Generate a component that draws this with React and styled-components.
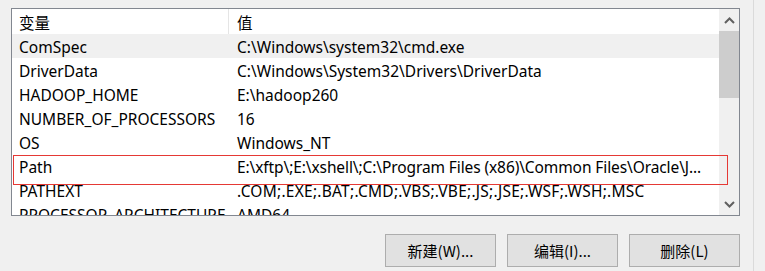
import React from "react";
import styled, { createGlobalStyle } from "styled-components";

const rows = [
  ["ComSpec", "C:\\Windows\\system32\\cmd.exe", 0],
  ["DriverData", "C:\\Windows\\System32\\Drivers\\DriverData", 0],
  ["HADOOP_HOME", "E:\\hadoop260", 0],
  ["NUMBER_OF_PROCESSORS", "16", 0],
  ["OS", "Windows_NT", 0],
  ["Path", "E:\\xftp\\;E:\\xshell\\;C:\\Program Files (x86)\\Common Files\\Oracle\\J...", -0.1],
  ["PATHEXT", ".COM;.EXE;.BAT;.CMD;.VBS;.VBE;.JS;.JSE;.WSF;.WSH;.MSC", 0.25],
  ["PROCESSOR_ARCHITECTURE", "AMD64", 0],
];

const Global = createGlobalStyle`
  html, body {
    margin: 0;
    background: #f0f0f0;
  }
  body {
    font-family: "Noto Sans", "Noto Sans CJK SC", sans-serif;
    font-size: 15.5px;
    color: #000;
  }
`;

const Window = styled.div`
  width: 754px;
  height: 271px;
  border-right: 1px solid #dadada;
  padding: 8px 0 0 11px;
  box-sizing: border-box;
`;

const ListBox = styled.div`
  position: relative;
  width: 729px;
  height: 208px;
  border: 1px solid #828790;
  box-sizing: border-box;
  background: #fff;
  display: flex;
`;

const Table = styled.div`
  flex: 1;
  overflow: hidden;
`;

const Row = styled.div`
  display: grid;
  grid-template-columns: 217px 1fr;
  height: ${(p) => (p.$header ? 25 : 24)}px;
  align-items: center;
  background: ${(p) => (p.$selected ? "#f0f0f0" : "#fff")};
  white-space: nowrap;
`;

const Cell = styled.div`
  box-sizing: border-box;
  padding: 2px 0 0 ${(p) => (p.$first ? 7 : 8)}px;
  height: 100%;
  display: flex;
  align-items: center;
  letter-spacing: ${(p) => p.$tracking || 0}px;
  border-right: ${(p) => (p.$divider ? "1px solid #e5e5e5" : "none")};
  overflow: hidden;
`;

const Highlight = styled.div`
  position: absolute;
  left: 1px;
  top: 146px;
  width: 715px;
  height: 30px;
  border: 1px solid #e53935;
  box-sizing: border-box;
  pointer-events: none;
`;

const ScrollBar = styled.div`
  width: 20px;
  background: #f0f0f0;
  display: flex;
  flex-direction: column;
`;

const Arrow = styled.div`
  height: 22px;
  display: flex;
  align-items: center;
  justify-content: center;
`;

const Thumb = styled.div`
  height: 67px;
  background: #cdcdcd;
`;

const Track = styled.div`
  flex: 1;
`;

const Buttons = styled.div`
  display: flex;
  justify-content: flex-end;
  gap: 11px;
  width: 729px;
  margin-top: 18px;
`;

const Button = styled.button`
  width: 111px;
  height: 33px;
  background: #e1e1e1;
  border: 1px solid #adadad;
  font-family: "Noto Sans CJK SC", sans-serif;
  font-size: 15px;
  color: #000;
  padding: 0;
`;

const Chevron = ({ up }) => (
  <svg width="11" height="7" viewBox="0 0 11 7">
    <path
      d={up ? "M1 6 L5.5 1.5 L10 6" : "M1 1 L5.5 5.5 L10 1"}
      fill="none"
      stroke="#606060"
      strokeWidth="2"
    />
  </svg>
);

export default function App() {
  return (
    <>
      <Global />
      <Window>
        <ListBox>
          <Table>
            <Row $header>
              <Cell $first $divider>变量</Cell>
              <Cell>值</Cell>
            </Row>
            {rows.map(([name, value, tracking], i) => (
              <Row key={name} $selected={i === 0}>
                <Cell $first>{name}</Cell>
                <Cell $tracking={tracking}>{value}</Cell>
              </Row>
            ))}
          </Table>
          <ScrollBar>
            <Arrow>
              <Chevron up />
            </Arrow>
            <Thumb />
            <Track />
            <Arrow>
              <Chevron />
            </Arrow>
          </ScrollBar>
          <Highlight />
        </ListBox>
        <Buttons>
          <Button>新建(W)...</Button>
          <Button>编辑(I)...</Button>
          <Button>删除(L)</Button>
        </Buttons>
      </Window>
    </>
  );
}
